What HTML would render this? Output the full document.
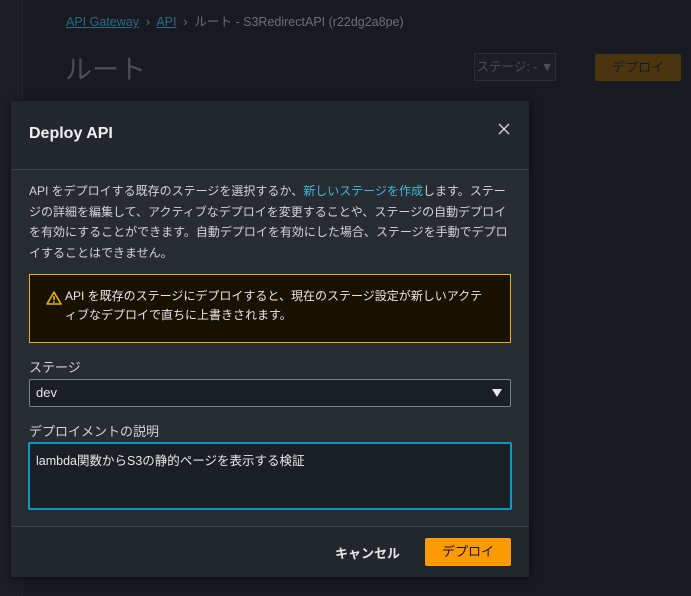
<!DOCTYPE html>
<html><head><meta charset="utf-8"><style>
body{margin:0;width:691px;height:596px;background:#171a20;font-family:"Liberation Sans","Noto Sans CJK JP",sans-serif;position:relative;overflow:hidden;color:#d1d5db}
.a{position:absolute}
</style></head><body>
<div class="a" style="left:0;top:0;width:22px;height:596px;background:#1b1e24;border-right:1px solid #22252b"></div>
<div class="a" style="left:66px;top:11px;font-size:12.5px;color:#6b7078;white-space:nowrap"><span style="color:#2f6a86;text-decoration:underline">API Gateway</span> &nbsp;›&nbsp; <span style="color:#2f6a86;text-decoration:underline">API</span> &nbsp;›&nbsp; ルート - S3RedirectAPI (r22dg2a8pe)</div>
<div class="a" style="left:65px;top:48px;font-size:27px;color:#4a4e55">ルート</div>
<div class="a" style="left:474px;top:53px;width:80px;height:26px;border:1px solid #2a2e35;background:#1b1e24;color:#4a4e55;font-size:12.5px;line-height:26px;text-align:center">ステージ: - ▼</div>
<div class="a" style="left:595px;top:54px;width:86px;height:27px;background:#4a3510;border-radius:2px;color:#1a1a1a;font-size:13px;line-height:27px;text-align:center">デプロイ</div>
<div class="a" style="left:11px;top:101px;width:518px;height:475px;background:#272b32;box-shadow:0 2px 8px rgba(0,0,0,.6)">
 <div class="a" style="left:0;top:0;width:518px;height:68px;background:#22262d;border-bottom:1px solid #3f444c"></div>
 <div class="a" style="left:18px;top:24px;font-size:16px;font-weight:bold;color:#f0f1f3">Deploy API</div>
 <svg class="a" style="left:487px;top:22px" width="12" height="12" viewBox="0 0 12 12"><path d="M1 1L11 11M11 1L1 11" stroke="#d1d5db" stroke-width="1.4"/></svg>
 <div class="a" style="left:18px;top:80px;width:486px;font-size:12px;line-height:20.5px;color:#d1d5db">API をデプロイする既存のステージを選択するか、<span style="color:#44b9d6">新しいステージを作成</span>します。ステージの詳細を編集して、アクティブなデプロイを変更することや、ステージの自動デプロイを有効にすることができます。自動デプロイを有効にした場合、ステージを手動でデプロイすることはできません。</div>
 <div class="a" style="left:18px;top:173px;width:480px;height:67px;border:1px solid #e5b50f;background:#191100"></div>
 <svg class="a" style="left:35px;top:190px" width="16" height="14" viewBox="0 0 16 14"><path d="M8 1.2L15 13H1Z" fill="none" stroke="#e5b50f" stroke-width="1.6" stroke-linejoin="round"/><path d="M8 5v4.2" stroke="#e5b50f" stroke-width="1.6"/><circle cx="8" cy="11" r=".9" fill="#e5b50f"/></svg>
 <div class="a" style="left:54px;top:186px;width:424px;font-size:12px;line-height:19px;color:#e8e8e8">API を既存のステージにデプロイすると、現在のステージ設定が新しいアクティブなデプロイで直ちに上書きされます。</div>
 <div class="a" style="left:18px;top:256px;font-size:13px;color:#d1d5db">ステージ</div>
 <div class="a" style="left:18px;top:278px;width:480px;height:26px;border:1px solid #7d8289;background:#1a1e25;border-radius:2px"></div>
 <div class="a" style="left:25px;top:284px;font-size:13px;color:#e8e8e8">dev</div>
 <svg class="a" style="left:481px;top:288px" width="10" height="8" viewBox="0 0 10 8"><path d="M0 0H10L5 8Z" fill="#e8e8e8"/></svg>
 <div class="a" style="left:18px;top:320px;font-size:13px;color:#d1d5db">デプロイメントの説明</div>
 <div class="a" style="left:17px;top:341px;width:480px;height:64px;border:2px solid #0b97bf;background:#1a1e25;border-radius:2px"></div>
 <div class="a" style="left:25px;top:349px;font-size:12.5px;color:#e8e8e8">lambda関数からS3の静的ページを表示する検証</div>
 <div class="a" style="left:0;top:425px;width:518px;height:50px;border-top:1px solid #3f444c;background:#22262d"></div>
 <div class="a" style="left:324px;top:442px;font-size:13px;font-weight:bold;color:#e8e8e8">キャンセル</div>
 <div class="a" style="left:414px;top:437px;width:86px;height:28px;background:#ff9900;border-radius:2px;color:#16191f;font-size:13px;line-height:28px;text-align:center">デプロイ</div>
</div>
</body></html>
